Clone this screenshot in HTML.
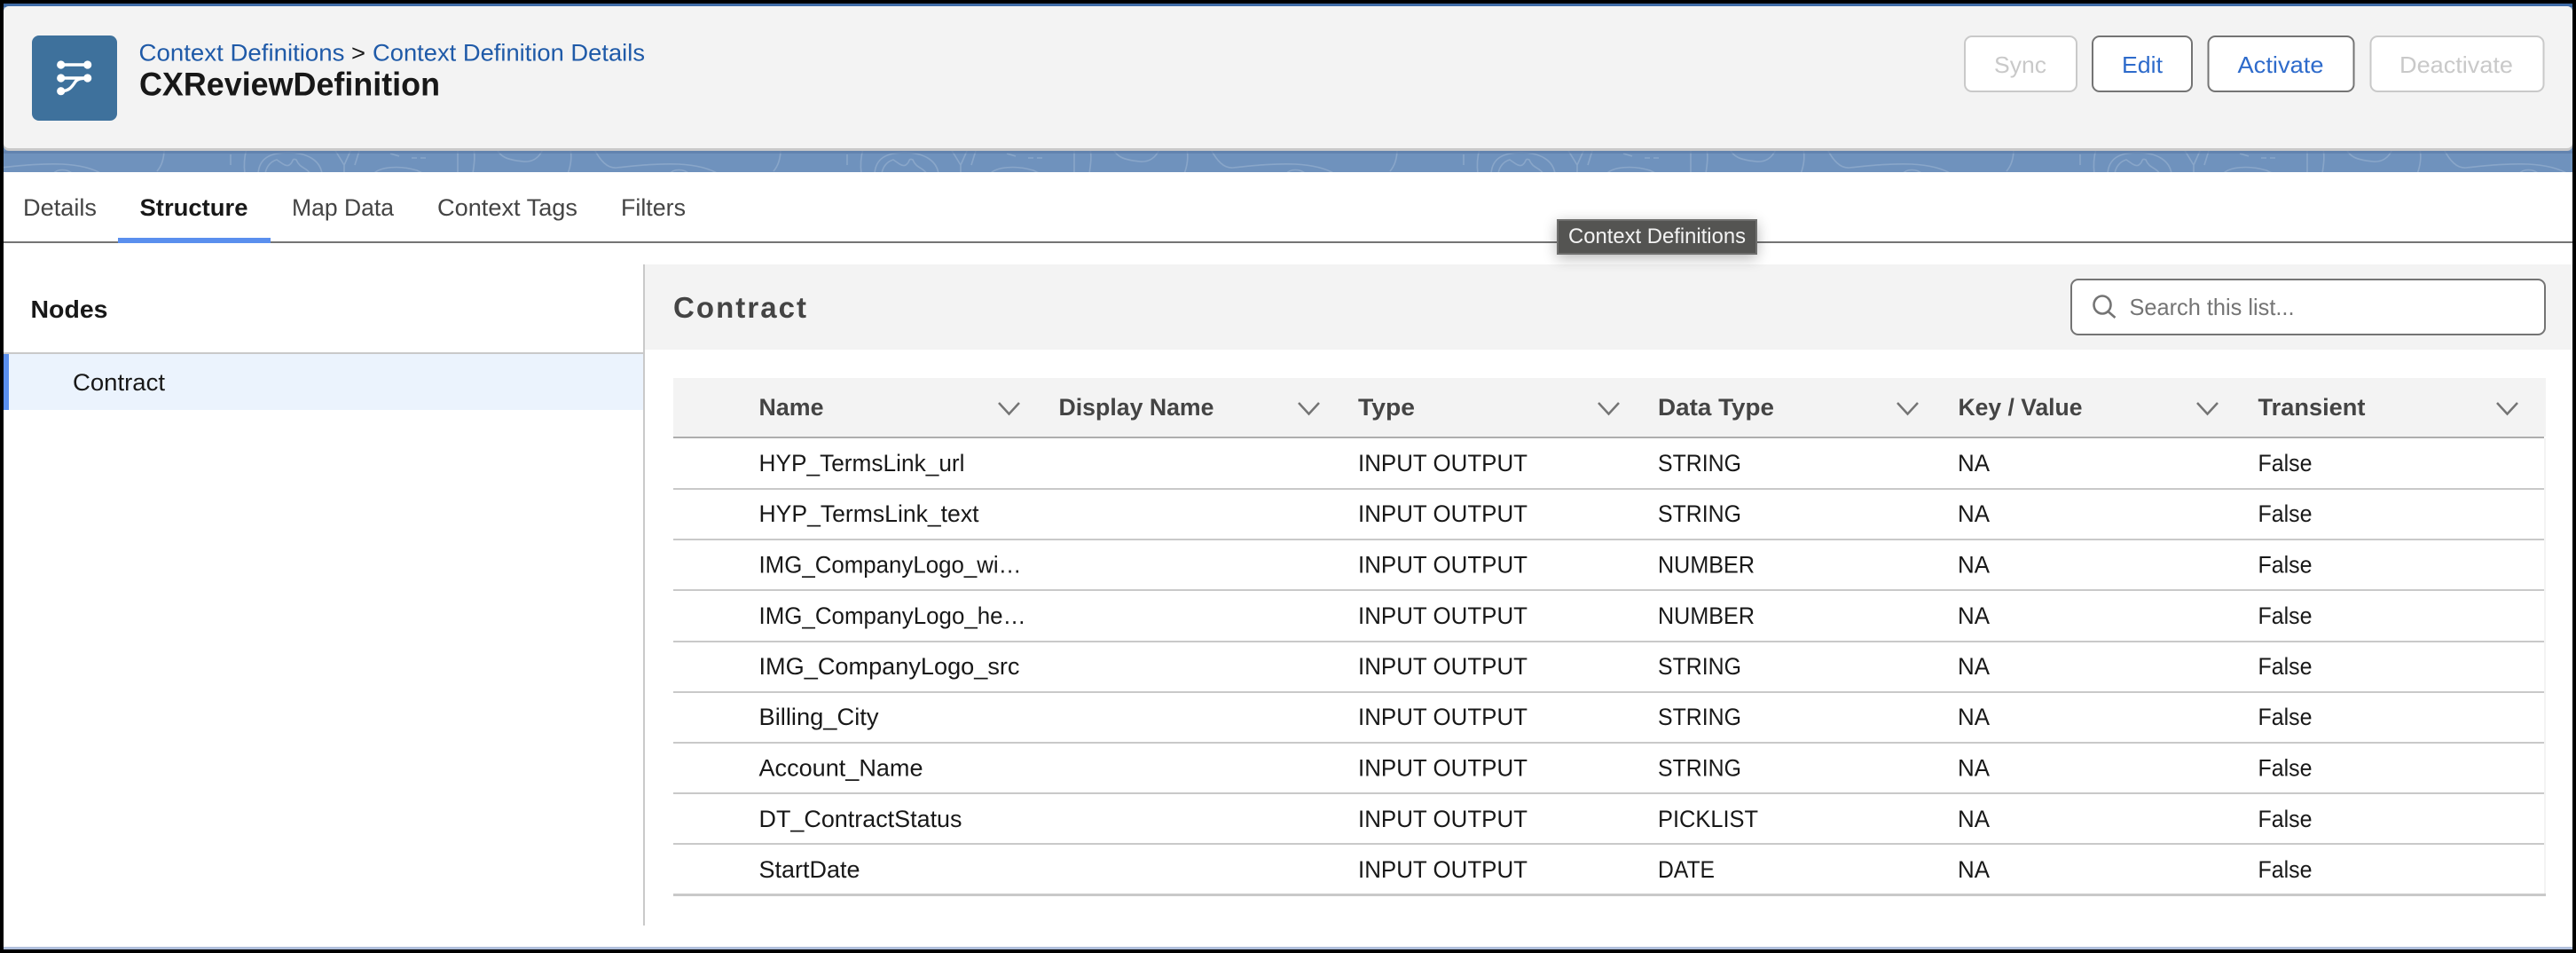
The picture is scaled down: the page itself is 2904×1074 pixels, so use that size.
<!DOCTYPE html>
<html lang="en">
<head>
<meta charset="utf-8">
<title>CXReviewDefinition</title>
<style>
html,body{margin:0;padding:0;background:#000;width:2904px;height:1074px;overflow:hidden}
svg{display:block}
text{font-family:"Liberation Sans",Arial,sans-serif;font-size:27px;fill:#181818;white-space:pre}
.b{font-weight:700}
.th{font-weight:700;fill:#444}
.tab{fill:#444}
.link{fill:#1f5aa8;font-size:26.5px}
.btn{fill:#2e6bcb;font-size:26px}
.dis{fill:#c9c9c9;font-size:26px}
</style>
</head>
<body>
<svg xmlns="http://www.w3.org/2000/svg" width="2904" height="1074" viewBox="0 0 2904 1074">
<defs>
<pattern id="topo" x="0" y="165" width="695" height="40" patternUnits="userSpaceOnUse">
<g fill="none" stroke="#ffffff" stroke-opacity=".18" stroke-width="1.6" transform="translate(0,-165)">
<path d="M0 189C20 187 45 184 70 185C90 186 105 190 115 196"/>
<path d="M60 196C64 190 76 190 82 196"/>
<path d="M185 168C185 178 183 186 177 193"/>
<path d="M260 174V186"/>
<path d="M278 168C275 178 275 188 276 196"/>
<path d="M291 196C292 178 305 172 325 172C345 172 361 180 363 196"/>
<path d="M299 196C300 188 305 182 312 180C318 184 322 188 326 186C332 182 328 178 334 180C338 190 345 188 350 196"/>
<path d="M377 168L388 186L396 168M388 186V196"/>
<path d="M405 170L400 186"/>
<path d="M421 196C428 188 450 186 470 192L478 196"/>
<path d="M440 173l10 3M464 178h6M474 178h6"/>
<path d="M516 168V196M534 168C536 178 534 188 533 196"/>
<path d="M560 168C564 176 570 180 590 182C600 183 608 178 612 168"/>
<path d="M643 168C645 178 643 188 640 196"/>
<path d="M670 168C676 180 684 190 695 189"/>
</g>
</pattern>
<filter id="ts" x="-20%" y="-50%" width="140%" height="200%"><feGaussianBlur stdDeviation="8"/></filter>
</defs>

<rect x="0" y="0" width="2904" height="1074" fill="#000"/>
<rect x="4" y="4" width="2896" height="1066" fill="#fff"/>
<rect x="4" y="1067" width="2896" height="3" fill="#b0bfdc"/>

<!-- banner -->
<rect x="4" y="4" width="2896" height="190" fill="#6f92bd"/>
<rect x="4" y="4" width="2896" height="4" fill="#3f6ba6"/>
<rect x="4" y="170" width="2896" height="24" fill="url(#topo)"/>
<rect x="4" y="170" width="2896" height="3" fill="#5c7ea9" opacity=".7"/>
<rect x="4" y="7" width="2896" height="163" rx="6" fill="#c9c9c9"/>
<rect x="4" y="7" width="2896" height="160" rx="6" fill="#f3f3f3"/>

<!-- icon -->
<rect x="36" y="40" width="96" height="96" rx="8" fill="#3e719c"/>
<g fill="#fff">
<circle cx="68.7" cy="73" r="4.6"/><circle cx="98.7" cy="73" r="4.6"/>
<circle cx="68.7" cy="88" r="4.6"/><circle cx="98.7" cy="88" r="4.6"/>
<circle cx="68.7" cy="102.7" r="4.6"/>
</g>
<g fill="none" stroke="#fff" stroke-width="3.4">
<path d="M69 73H99"/><path d="M69 88H99"/>
<path d="M69 102.7C79 102.7 82 96 85 92C87 89 91 88 99 88"/>
</g>

<!-- header text -->
<text class="link" x="156.5" y="68.5" textLength="232" lengthAdjust="spacingAndGlyphs">Context Definitions</text>
<text x="396" y="68.5" style="font-size:26px" textLength="16" lengthAdjust="spacingAndGlyphs">&gt;</text>
<text class="link" x="420" y="68.5" textLength="307" lengthAdjust="spacingAndGlyphs">Context Definition Details</text>
<text class="b" x="157" y="107.5" style="font-size:37px" textLength="339" lengthAdjust="spacingAndGlyphs">CXReviewDefinition</text>

<!-- buttons -->
<rect x="2215" y="41" width="126" height="62" rx="8" fill="#fff" stroke="#c9c9c9" stroke-width="2"/>
<text class="dis" x="2248" y="82" textLength="59" lengthAdjust="spacingAndGlyphs">Sync</text>
<rect x="2359" y="41" width="112" height="62" rx="8" fill="#fff" stroke="#747474" stroke-width="2"/>
<text class="btn" x="2392" y="82" textLength="46" lengthAdjust="spacingAndGlyphs">Edit</text>
<rect x="2489.5" y="41" width="164" height="62" rx="8" fill="#fff" stroke="#747474" stroke-width="2"/>
<text class="btn" x="2522.5" y="82" textLength="97" lengthAdjust="spacingAndGlyphs">Activate</text>
<rect x="2672.5" y="41" width="195" height="62" rx="8" fill="#fff" stroke="#c9c9c9" stroke-width="2"/>
<text class="dis" x="2705" y="82" textLength="128" lengthAdjust="spacingAndGlyphs">Deactivate</text>

<!-- tabs -->
<text class="tab" x="26" y="243" textLength="83" lengthAdjust="spacingAndGlyphs">Details</text>
<text class="b" x="157.5" y="243" textLength="122" lengthAdjust="spacingAndGlyphs">Structure</text>
<text class="tab" x="329" y="243" textLength="115" lengthAdjust="spacingAndGlyphs">Map Data</text>
<text class="tab" x="493" y="243" textLength="158" lengthAdjust="spacingAndGlyphs">Context Tags</text>
<text class="tab" x="700" y="243" textLength="73" lengthAdjust="spacingAndGlyphs">Filters</text>
<rect x="4" y="272" width="2896" height="2" fill="#747474"/>
<rect x="133" y="268" width="172" height="6" fill="#5a8fee"/>

<!-- sidebar -->
<text class="b" x="34.5" y="358" style="font-size:28px" textLength="87" lengthAdjust="spacingAndGlyphs">Nodes</text>
<rect x="4" y="397" width="722" height="2" fill="#c9c9c9"/>
<rect x="4" y="399" width="722" height="63" fill="#ebf3fd"/>
<rect x="4" y="399" width="6" height="63" fill="#5a8fee"/>
<text x="82" y="440" textLength="104" lengthAdjust="spacingAndGlyphs">Contract</text>
<rect x="725" y="298" width="2" height="745" fill="#c9c9c9"/>

<!-- list header -->
<rect x="727" y="298" width="2173" height="96" fill="#f3f3f3"/>
<text class="th" x="759" y="358" style="font-size:33px" textLength="150" lengthAdjust="spacing">Contract</text>
<rect x="2335" y="315" width="534" height="62" rx="8" fill="#fff" stroke="#747474" stroke-width="2"/>
<g fill="none" stroke="#747474" stroke-width="2.6">
<ellipse cx="2370" cy="343.5" rx="9.5" ry="10"/>
<path d="M2376.5 351L2384.5 358"/>
</g>
<text x="2400.5" y="355" style="font-size:26px;fill:#747474" textLength="186" lengthAdjust="spacingAndGlyphs">Search this list...</text>

<!-- tooltip shadow -->
<rect x="1755" y="251" width="226" height="40" fill="#000" opacity=".28" filter="url(#ts)"/>

<!-- table header -->
<rect x="759" y="426" width="2111" height="66" fill="#f3f3f3"/>
<rect x="759" y="492" width="2109" height="2" fill="#aeaeae"/>
<text class="th" x="855.5" y="468" textLength="73" lengthAdjust="spacingAndGlyphs">Name</text>
<text class="th" x="1193.5" y="468" textLength="175" lengthAdjust="spacingAndGlyphs">Display Name</text>
<text class="th" x="1531" y="468" textLength="64" lengthAdjust="spacingAndGlyphs">Type</text>
<text class="th" x="1869" y="468" textLength="131" lengthAdjust="spacingAndGlyphs">Data Type</text>
<text class="th" x="2207.5" y="468" textLength="140" lengthAdjust="spacingAndGlyphs">Key / Value</text>
<text class="th" x="2545.5" y="468" textLength="121" lengthAdjust="spacingAndGlyphs">Transient</text>
<g fill="none" stroke="#747474" stroke-width="2.5">
<path d="M1126 454L1137.5 466.5L1149 454"/>
<path d="M1464 454L1475.5 466.5L1487 454"/>
<path d="M1802 454L1813.5 466.5L1825 454"/>
<path d="M2139 454L2150.5 466.5L2162 454"/>
<path d="M2477 454L2488.5 466.5L2500 454"/>
<path d="M2815 454L2826.5 466.5L2838 454"/>
</g>

<!-- table row lines -->
<g fill="#c9c9c9">
<rect x="759" y="550" width="2109" height="2"/>
<rect x="759" y="607" width="2109" height="2"/>
<rect x="759" y="664" width="2109" height="2"/>
<rect x="759" y="722" width="2109" height="2"/>
<rect x="759" y="779" width="2109" height="2"/>
<rect x="759" y="836" width="2109" height="2"/>
<rect x="759" y="893" width="2109" height="2"/>
<rect x="759" y="950" width="2109" height="2"/>
<rect x="759" y="1007" width="2111" height="3"/>
</g>
<rect x="2868" y="494" width="2" height="513" fill="#f3f3f3"/>

<!-- rows -->
<text x="855.5" y="531" textLength="232" lengthAdjust="spacingAndGlyphs">HYP_TermsLink_url</text>
<text x="1531" y="531" textLength="191" lengthAdjust="spacingAndGlyphs">INPUT OUTPUT</text>
<text x="1869" y="531" textLength="94" lengthAdjust="spacingAndGlyphs">STRING</text>
<text x="2207" y="531" textLength="36" lengthAdjust="spacingAndGlyphs">NA</text>
<text x="2545.5" y="531" textLength="61" lengthAdjust="spacingAndGlyphs">False</text>

<text x="855.5" y="588" textLength="248" lengthAdjust="spacingAndGlyphs">HYP_TermsLink_text</text>
<text x="1531" y="588" textLength="191" lengthAdjust="spacingAndGlyphs">INPUT OUTPUT</text>
<text x="1869" y="588" textLength="94" lengthAdjust="spacingAndGlyphs">STRING</text>
<text x="2207" y="588" textLength="36" lengthAdjust="spacingAndGlyphs">NA</text>
<text x="2545.5" y="588" textLength="61" lengthAdjust="spacingAndGlyphs">False</text>

<text x="855.5" y="645.5" textLength="296" lengthAdjust="spacingAndGlyphs">IMG_CompanyLogo_wi…</text>
<text x="1531" y="645.5" textLength="191" lengthAdjust="spacingAndGlyphs">INPUT OUTPUT</text>
<text x="1869" y="645.5" textLength="109" lengthAdjust="spacingAndGlyphs">NUMBER</text>
<text x="2207" y="645.5" textLength="36" lengthAdjust="spacingAndGlyphs">NA</text>
<text x="2545.5" y="645.5" textLength="61" lengthAdjust="spacingAndGlyphs">False</text>

<text x="855.5" y="703" textLength="301" lengthAdjust="spacingAndGlyphs">IMG_CompanyLogo_he…</text>
<text x="1531" y="703" textLength="191" lengthAdjust="spacingAndGlyphs">INPUT OUTPUT</text>
<text x="1869" y="703" textLength="109" lengthAdjust="spacingAndGlyphs">NUMBER</text>
<text x="2207" y="703" textLength="36" lengthAdjust="spacingAndGlyphs">NA</text>
<text x="2545.5" y="703" textLength="61" lengthAdjust="spacingAndGlyphs">False</text>

<text x="855.5" y="760" textLength="294" lengthAdjust="spacingAndGlyphs">IMG_CompanyLogo_src</text>
<text x="1531" y="760" textLength="191" lengthAdjust="spacingAndGlyphs">INPUT OUTPUT</text>
<text x="1869" y="760" textLength="94" lengthAdjust="spacingAndGlyphs">STRING</text>
<text x="2207" y="760" textLength="36" lengthAdjust="spacingAndGlyphs">NA</text>
<text x="2545.5" y="760" textLength="61" lengthAdjust="spacingAndGlyphs">False</text>

<text x="855.5" y="817" textLength="135" lengthAdjust="spacingAndGlyphs">Billing_City</text>
<text x="1531" y="817" textLength="191" lengthAdjust="spacingAndGlyphs">INPUT OUTPUT</text>
<text x="1869" y="817" textLength="94" lengthAdjust="spacingAndGlyphs">STRING</text>
<text x="2207" y="817" textLength="36" lengthAdjust="spacingAndGlyphs">NA</text>
<text x="2545.5" y="817" textLength="61" lengthAdjust="spacingAndGlyphs">False</text>

<text x="855.5" y="874.5" textLength="185" lengthAdjust="spacingAndGlyphs">Account_Name</text>
<text x="1531" y="874.5" textLength="191" lengthAdjust="spacingAndGlyphs">INPUT OUTPUT</text>
<text x="1869" y="874.5" textLength="94" lengthAdjust="spacingAndGlyphs">STRING</text>
<text x="2207" y="874.5" textLength="36" lengthAdjust="spacingAndGlyphs">NA</text>
<text x="2545.5" y="874.5" textLength="61" lengthAdjust="spacingAndGlyphs">False</text>

<text x="855.5" y="932" textLength="229" lengthAdjust="spacingAndGlyphs">DT_ContractStatus</text>
<text x="1531" y="932" textLength="191" lengthAdjust="spacingAndGlyphs">INPUT OUTPUT</text>
<text x="1869" y="932" textLength="113" lengthAdjust="spacingAndGlyphs">PICKLIST</text>
<text x="2207" y="932" textLength="36" lengthAdjust="spacingAndGlyphs">NA</text>
<text x="2545.5" y="932" textLength="61" lengthAdjust="spacingAndGlyphs">False</text>

<text x="855.5" y="989" textLength="114" lengthAdjust="spacingAndGlyphs">StartDate</text>
<text x="1531" y="989" textLength="191" lengthAdjust="spacingAndGlyphs">INPUT OUTPUT</text>
<text x="1869" y="989" textLength="64" lengthAdjust="spacingAndGlyphs">DATE</text>
<text x="2207" y="989" textLength="36" lengthAdjust="spacingAndGlyphs">NA</text>
<text x="2545.5" y="989" textLength="61" lengthAdjust="spacingAndGlyphs">False</text>

<!-- tooltip -->
<rect x="1756" y="248" width="224" height="38" fill="#545452" stroke="#6e6e6d" stroke-width="2"/>
<text x="1768" y="274" style="font-size:24px;fill:#f3f3f3" textLength="200" lengthAdjust="spacingAndGlyphs">Context Definitions</text>
</svg>
</body>
</html>
